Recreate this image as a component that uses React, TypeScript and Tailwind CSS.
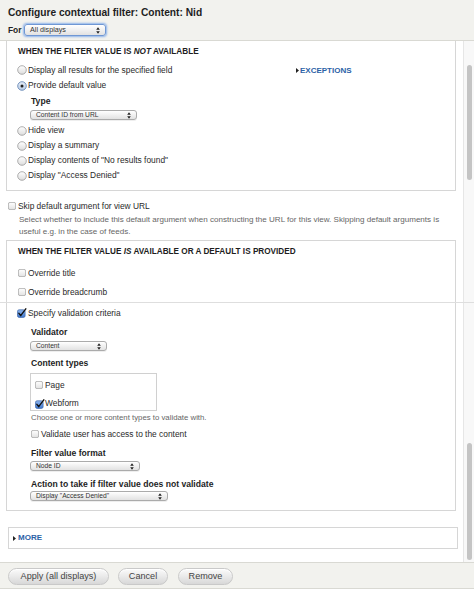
import React from "react";

function Radio({ checked = false }: { checked?: boolean }) {
  return (
    <svg width="10" height="10" viewBox="0 0 10 10" className="shrink-0">
      <defs>
        <linearGradient id="rg" x1="0" y1="0" x2="0" y2="1">
          <stop offset="0" stopColor="#ffffff" />
          <stop offset="1" stopColor="#dcdcdc" />
        </linearGradient>
        <linearGradient id="rgc" x1="0" y1="0" x2="0" y2="1">
          <stop offset="0" stopColor="#e6eef8" />
          <stop offset="1" stopColor="#b9cbe4" />
        </linearGradient>
      </defs>
      <circle cx="5" cy="5" r="4.3" fill={checked ? "url(#rgc)" : "url(#rg)"} stroke={checked ? "#5c7fb0" : "#9a9a9a"} strokeWidth="0.8" />
      {checked && <circle cx="5" cy="5" r="1.5" fill="#222" />}
    </svg>
  );
}

function Checkbox({ checked = false }: { checked?: boolean }) {
  if (checked) {
    return (
      <svg width="10" height="10" viewBox="0 0 10 10" className="shrink-0">
        <defs>
          <linearGradient id="cbc" x1="0" y1="0" x2="0" y2="1">
            <stop offset="0" stopColor="#8fb6ee" />
            <stop offset="1" stopColor="#3f78d0" />
          </linearGradient>
        </defs>
        <rect x="0.5" y="1.8" width="7.6" height="7.6" rx="1.6" fill="url(#cbc)" stroke="#3a64a8" strokeWidth="0.7" />
        <path d="M1.9 5.3 L3.7 7.7 L8.8 0.8" fill="none" stroke="#111" strokeWidth="1.4" strokeLinecap="round" strokeLinejoin="round" />
      </svg>
    );
  }
  return (
    <svg width="8" height="8" viewBox="0 0 8 8" className="shrink-0">
      <defs>
        <linearGradient id="cbu" x1="0" y1="0" x2="0" y2="1">
          <stop offset="0" stopColor="#ffffff" />
          <stop offset="1" stopColor="#e2e2e2" />
        </linearGradient>
      </defs>
      <rect x="0.4" y="0.4" width="7.2" height="7.2" rx="1.6" fill="url(#cbu)" stroke="#9c9c9c" strokeWidth="0.7" />
    </svg>
  );
}

function Arrows() {
  return (
    <svg width="4" height="7" viewBox="0 0 4 7" className="shrink-0">
      <path d="M2 0.3 L3.8 2.8 L0.2 2.8 Z" fill="#222" />
      <path d="M2 6.7 L3.8 4.2 L0.2 4.2 Z" fill="#222" />
    </svg>
  );
}

function Tri() {
  return (
    <svg width="3" height="5" viewBox="0 0 3 5" className="shrink-0">
      <path d="M0 0 L3 2.5 L0 5 Z" fill="#222" />
    </svg>
  );
}

function Select({ label, className, focused = false }: { label: string; className: string; focused?: boolean }) {
  return (
    <div
      className={`flex items-center justify-between rounded-[3px] border bg-gradient-to-b from-white to-[#e2e2e2] pl-[5px] pr-[5px] text-[#333] ${
        focused ? "border-[#6f97d4] shadow-[0_0_2px_1px_#8db3ea]" : "border-[#ababab] shadow-[0_1px_0_#eee]"
      } ${className}`}
    >
      <span className="leading-none">{label}</span>
      <Arrows />
    </div>
  );
}

function Button({ label, className }: { label: string; className: string }) {
  return (
    <div
      className={`flex h-[17px] items-center justify-center rounded-full border border-[#c9c9c9] bg-gradient-to-b from-[#fbfbfb] to-[#d8d8d8] text-[9.1px] text-[#444] shadow-[inset_0_1px_0_#fff] ${className}`}
    >
      {label}
    </div>
  );
}

export default function App() {
  return (
    <div className="relative h-[592px] w-[474px] overflow-hidden bg-white font-['Liberation_Sans',Arial,sans-serif] text-[8.4px] text-[#2a2a2a]">
      {/* Header */}
      <div className="border-b border-[#d9d9d3] bg-[#f2f2ee] pb-[4px] pl-[8px] pt-[5px]">
        <div className="flex h-[15px] items-center text-[10.2px] font-bold text-[#1e1e1e]">
          Configure contextual filter: Content: Nid
        </div>
        <div className="mt-[4px] flex h-[12px] items-center">
          <span className="w-[16px] font-bold text-[#222]">For</span>
          <Select label="All displays" className="h-[12px] w-[82px] text-[7.2px]" focused />
        </div>
      </div>

      <div className="flex h-[521px]">
        {/* Scrolling content */}
        <div className="w-[463px] overflow-hidden">
          <div className="ml-[6px] w-[450px] border-x border-b border-[#d6d6d6] pb-[7px] pl-[10px] pt-[5px]">
            <div className="flex h-[12px] items-center pl-[1px] text-[8.2px] font-bold text-[#1e1e1e]">
              <span>
                WHEN THE FILTER VALUE IS <em>NOT</em> AVAILABLE
              </span>
            </div>
            <div className="mt-[5px] flex h-[15px] items-center">
              <div className="flex w-[279px] items-center gap-[1px]">
                <Radio />
                <span>Display all results for the specified field</span>
              </div>
              <div className="flex items-center gap-[1px] text-[8px] font-bold text-[#2b62a6]">
                <Tri />
                <span>EXCEPTIONS</span>
              </div>
            </div>
            <div className="flex h-[15px] items-center gap-[1px]">
              <Radio checked />
              <span>Provide default value</span>
            </div>
            <div className="mt-[2px] flex h-[12px] items-center pl-[14px] text-[8.6px] font-bold text-[#1e1e1e]">Type</div>
            <Select label="Content ID from URL" className="ml-[13px] mt-[3px] h-[10px] w-[107px] text-[6.7px]" />
            <div className="mt-[3px] flex h-[15px] items-center gap-[1px]">
              <Radio />
              <span>Hide view</span>
            </div>
            <div className="flex h-[15px] items-center gap-[1px]">
              <Radio />
              <span>Display a summary</span>
            </div>
            <div className="flex h-[15px] items-center gap-[1px]">
              <Radio />
              <span>Display contents of "No results found"</span>
            </div>
            <div className="flex h-[15px] items-center gap-[1px]">
              <Radio />
              <span>Display "Access Denied"</span>
            </div>
          </div>

          <div className="ml-[8px] mt-[8px] flex h-[14px] items-center gap-[2px]">
            <Checkbox />
            <span>Skip default argument for view URL</span>
          </div>
          <div className="ml-[19px] mt-[1px] w-[440px] text-[8.05px] leading-[12px] text-[#666]">
            Select whether to include this default argument when constructing the URL for this view. Skipping default arguments is
            <br />
            useful e.g. in the case of feeds.
          </div>

          <div className="ml-[6px] mt-[2px] w-[450px] border border-[#d6d6d6] pb-[9px] pl-[11px] pt-[5px]">
            <div className="flex h-[12px] items-center text-[8.2px] font-bold text-[#1e1e1e]">
              <span>
                WHEN THE FILTER VALUE <em>IS</em> AVAILABLE OR A DEFAULT IS PROVIDED
              </span>
            </div>
            <div className="mt-[8px] flex h-[14px] items-center gap-[2px]">
              <Checkbox />
              <span>Override title</span>
            </div>
            <div className="mt-[5px] flex h-[14px] items-center gap-[2px]">
              <Checkbox />
              <span>Override breadcrumb</span>
            </div>
            <div className="-ml-[1px] mt-[7px] flex h-[14px] items-center gap-[1px]">
              <Checkbox checked />
              <span>Specify validation criteria</span>
            </div>
            <div className="mt-[6px] flex h-[12px] items-center pl-[13px] text-[8.6px] font-bold text-[#1e1e1e]">Validator</div>
            <Select label="Content" className="ml-[12px] mt-[3px] h-[10px] w-[77px] text-[6.7px]" />
            <div className="mt-[6px] flex h-[12px] items-center pl-[13px] text-[8.6px] font-bold text-[#1e1e1e]">Content types</div>
            <div className="ml-[12px] mt-[4px] w-[127px] border border-[#d0d0d0] pl-[4px] pt-[4px]">
              <div className="flex h-[14px] items-center gap-[2px]">
                <Checkbox />
                <span>Page</span>
              </div>
              <div className="mt-[5px] flex h-[13px] items-center">
                <Checkbox checked />
                <span>Webform</span>
              </div>
            </div>
            <div className="mt-[1px] flex h-[12px] items-center pl-[13px] text-[7.8px] text-[#666]">
              Choose one or more content types to validate with.
            </div>
            <div className="mt-[3px] flex h-[14px] items-center gap-[2px] pl-[13px]">
              <Checkbox />
              <span>Validate user has access to the content</span>
            </div>
            <div className="mt-[6px] flex h-[12px] items-center pl-[13px] text-[8.6px] font-bold text-[#1e1e1e]">Filter value format</div>
            <Select label="Node ID" className="ml-[12px] mt-[2px] h-[10px] w-[110px] text-[6.7px]" />
            <div className="mt-[7px] flex h-[12px] items-center pl-[13px] text-[8.6px] font-bold text-[#1e1e1e]">
              Action to take if filter value does not validate
            </div>
            <Select label={'Display "Access Denied"'} className="ml-[12px] mt-[1px] h-[10px] w-[138px] text-[6.7px]" />
          </div>

          <div className="ml-[8px] mt-[16px] flex h-[22px] w-[450px] items-center gap-[2px] border border-[#d6d6d6] pl-[4px] text-[8px] font-bold text-[#2b62a6]">
            <Tri />
            <span>MORE</span>
          </div>
        </div>

        {/* Scrollbar */}
        <div className="flex w-[11px] flex-col items-center border-l border-[#e6e6e6] bg-[#f8f8f8]">
          <div className="mt-[24px] h-[115px] w-[5px] rounded-full bg-[#c4c4c4]" />
          <div className="mt-[263px] h-[117px] w-[5px] rounded-full bg-[#c4c4c4]" />
        </div>
      </div>

      {/* Footer */}
      <div className="flex gap-[9px] border-y border-[#d9d9d3] bg-[#f2f2ee] pb-[3px] pl-[8px] pt-[5px]">
        <Button label="Apply (all displays)" className="w-[101px]" />
        <Button label="Cancel" className="w-[50px]" />
        <Button label="Remove" className="ml-[1px] w-[55px]" />
      </div>

      {/* stitch seam across the page */}
      <div className="absolute left-0 right-0 top-[302px] h-px bg-[#dedede]" />
    </div>
  );
}
